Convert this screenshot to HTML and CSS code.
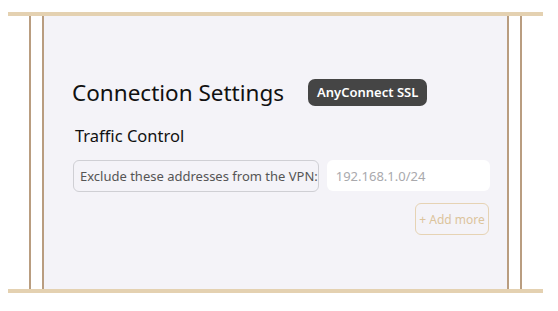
FILE: index.html
```html
<!DOCTYPE html>
<html>
<head>
<meta charset="utf-8">
<link rel="stylesheet" href="styles.css">
</head>
<body>
<div class="frame">
  <div class="rail">
    <div class="panel">
      <div class="title-row">
        <h1 class="title">Connection Settings</h1>
        <span class="badge">AnyConnect SSL</span>
      </div>
      <h2 class="section">Traffic Control</h2>
      <div class="field-row">
        <div class="field-label">Exclude these addresses from the VPN:</div>
        <input class="field-input" type="text" placeholder="192.168.1.0/24">
      </div>
      <div class="actions">
        <button class="add-btn" type="button">+ Add more</button>
      </div>
    </div>
  </div>
</div>
</body>
</html>
```
FILE: styles.css
```css
html, body {
  background: #ffffff;
}
body {
  margin: 8px;
  font-family: "Noto Sans", "Open Sans", sans-serif;
}
.frame {
  margin-top: 4px;
  width: 535px;
  border-top: 4px solid #e4d1b1;
  border-bottom: 4px solid #e4d1b1;
}
.rail {
  margin: 0 21px;
  height: 273px;
  padding: 0 11px;
  border-left: 2px solid #b99d80;
  border-right: 2px solid #b99d80;
}
.panel {
  height: 100%;
  box-sizing: border-box;
  background: #f4f3f8;
  border-left: 2px solid #b99d80;
  border-right: 2px solid #b99d80;
  padding: 61px 18px 0 28px;
}
.title-row {
  display: flex;
  align-items: center;
  gap: 24px;
}
.title {
  margin: 0;
  font-size: 22.5px;
  font-weight: 400;
  color: #111;
}
.badge {
  background: #454545;
  color: #fff;
  font-size: 13px;
  font-weight: 600;
  padding: 0 9px;
  height: 27px;
  line-height: 27px;
  border-radius: 7px;
}
.section {
  margin: 16px 0 0 3px;
  font-size: 16.5px;
  font-weight: 400;
  color: #111;
}
.field-row {
  display: flex;
  gap: 8px;
  margin: 13px 0 0 1px;
}
.field-label {
  box-sizing: border-box;
  width: 246px;
  height: 32px;
  border: 1px solid #cfcfd4;
  border-radius: 6px;
  font-size: 13px;
  color: #555;
  line-height: 30px;
  padding-left: 6px;
  white-space: nowrap;
}
.field-input {
  box-sizing: border-box;
  width: 163px;
  height: 31px;
  border: none;
  border-radius: 6px;
  background: #fff;
  font-family: inherit;
  font-size: 13px;
  padding: 0 9px;
  outline: none;
}
.field-input::placeholder {
  color: #a9a9ad;
}
.actions {
  display: flex;
  justify-content: flex-end;
  margin-top: 11px;
}
.add-btn {
  box-sizing: border-box;
  width: 74px;
  height: 32px;
  background: transparent;
  border: 1px solid #e6d3b4;
  border-radius: 6px;
  color: #dcc49c;
  font-family: inherit;
  font-size: 12px;
  padding: 0;
}
```
